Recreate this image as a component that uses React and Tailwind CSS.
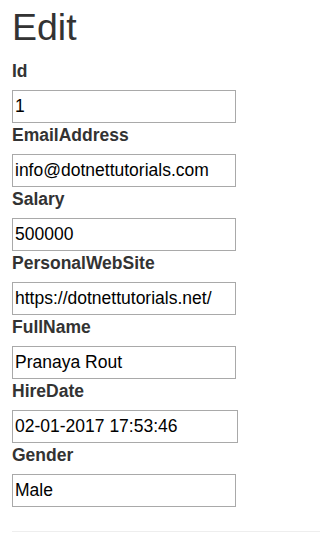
import React from "react";

const fields = [
  { label: "Id", value: "1" },
  { label: "EmailAddress", value: "info@dotnettutorials.com" },
  { label: "Salary", value: "500000" },
  { label: "PersonalWebSite", value: "https://dotnettutorials.net/" },
  { label: "FullName", value: "Pranaya Rout" },
  { label: "HireDate", value: "02-01-2017 17:53:46", wide: true },
  { label: "Gender", value: "Male" },
];

const App = () => {
  return (
    <div className="bg-white min-h-[533px] pl-[12px] pt-[7px] text-[#333] font-['Liberation_Sans',Arial,sans-serif]">
      <h2 className="text-[37.5px] leading-[41px] font-normal mb-[11px]">Edit</h2>
      <form>
        {fields.map((f) => (
          <div key={f.label}>
            <label className="block text-[17.5px] leading-[24px] font-bold mb-[7px]">
              {f.label}
            </label>
            <input
              type="text"
              defaultValue={f.value}
              className={`block h-[33px] border border-[#a9a9a9] bg-white pl-[2px] text-[17.5px] text-black outline-none ${
                f.wide ? "w-[226px]" : "w-[224px]"
              }`}
            />
          </div>
        ))}
      </form>
      <hr className="mt-[24px] border-0 border-t border-[#eee]" />
    </div>
  );
};

export default App;
